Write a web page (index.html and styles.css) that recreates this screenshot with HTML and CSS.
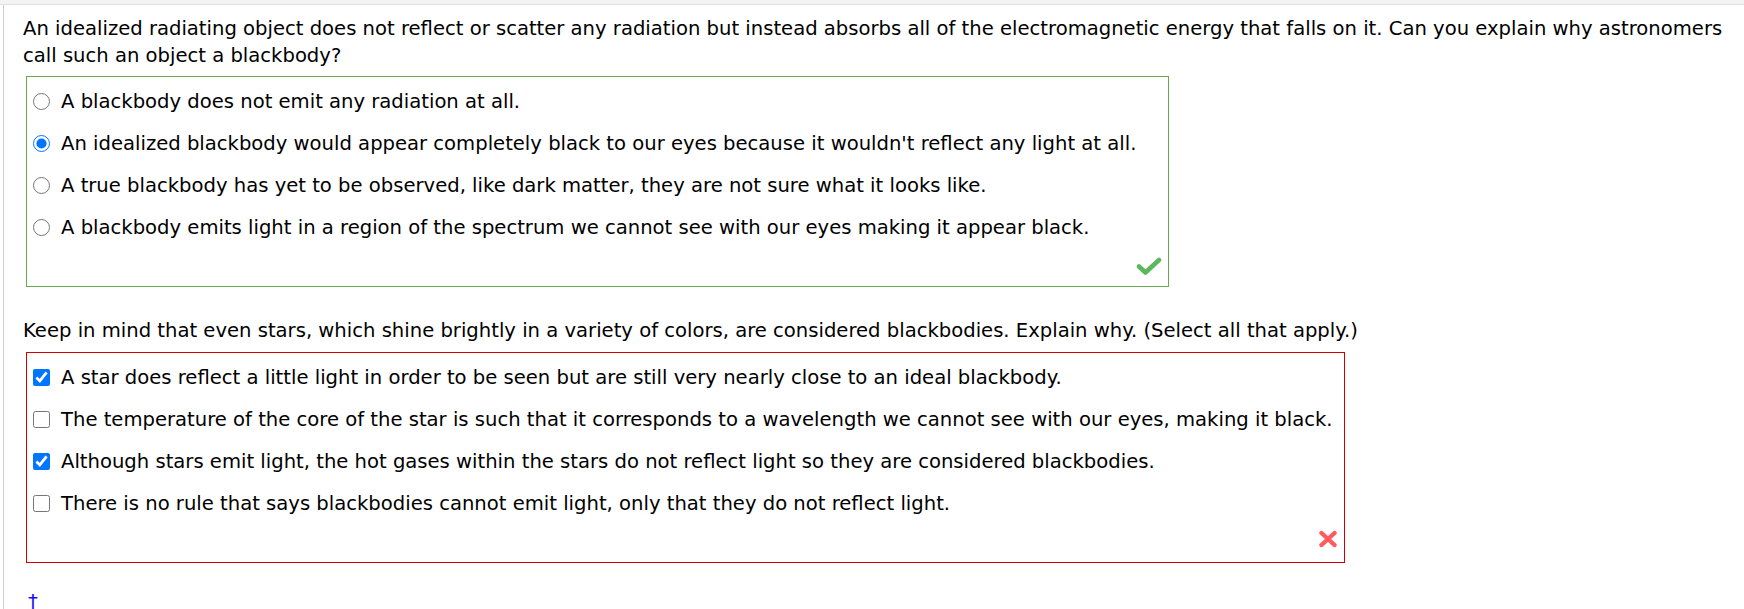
FILE: index.html
```html
<!DOCTYPE html>
<html>
<head>
<meta charset="utf-8">
<link rel="stylesheet" href="styles.css">
</head>
<body>
<div class="topbar"></div>
<div class="page">
  <p class="question">An idealized radiating object does not reflect or scatter any radiation but instead absorbs all of the electromagnetic energy that falls on it. Can you explain why astronomers call such an object a blackbody?</p>
  <div class="answers correct">
    <label class="option"><input type="radio" name="q1"><span>A blackbody does not emit any radiation at all.</span></label>
    <label class="option"><input type="radio" name="q1" checked><span>An idealized blackbody would appear completely black to our eyes because it wouldn't reflect any light at all.</span></label>
    <label class="option"><input type="radio" name="q1"><span>A true blackbody has yet to be observed, like dark matter, they are not sure what it looks like.</span></label>
    <label class="option"><input type="radio" name="q1"><span>A blackbody emits light in a region of the spectrum we cannot see with our eyes making it appear black.</span></label>
    <div class="status">
      <svg class="icon-check" width="26" height="18" viewBox="0 0 26 18"><path d="M3 9.5 L9.5 15.5 L23 3" fill="none" stroke="#5cb85c" stroke-width="4.6" stroke-linecap="round" stroke-linejoin="round"/></svg>
    </div>
  </div>

  <p class="question q2">Keep in mind that even stars, which shine brightly in a variety of colors, are considered blackbodies. Explain why. (Select all that apply.)</p>
  <div class="answers wrong">
    <label class="option"><input type="checkbox" checked><span>A star does reflect a little light in order to be seen but are still very nearly close to an ideal blackbody.</span></label>
    <label class="option"><input type="checkbox"><span>The temperature of the core of the star is such that it corresponds to a wavelength we cannot see with our eyes, making it black.</span></label>
    <label class="option"><input type="checkbox" checked><span>Although stars emit light, the hot gases within the stars do not reflect light so they are considered blackbodies.</span></label>
    <label class="option"><input type="checkbox"><span>There is no rule that says blackbodies cannot emit light, only that they do not reflect light.</span></label>
    <div class="status">
      <svg class="icon-x" width="20" height="18" viewBox="0 0 20 18"><path d="M3.5 3 L16.5 15 M16.5 3 L3.5 15" fill="none" stroke="#ff5a5f" stroke-width="4.4" stroke-linecap="round"/></svg>
    </div>
  </div>
  <div class="dagger">†</div>
</div>
</body>
</html>
```

FILE: styles.css
```css
html, body {
  margin: 0;
  padding: 0;
  background: #fff;
}
body {
  font-family: "DejaVu Sans", Verdana, sans-serif;
  font-size: 19.6px;
  color: #000;
  overflow: hidden;
  height: 609px;
}
.topbar {
  height: 4px;
  background: #f3f3f3;
  border-bottom: 1px solid #e0e0e0;
}
.page {
  margin-left: 3px;
  border-left: 1px solid #cfcfcf;
  padding: 10px 0 0 19px;
  height: 700px;
}
.question {
  margin: 0;
  line-height: 27px;
}
.q2 {
  margin-top: 30px;
}
.answers {
  margin: 7px 0 0 3px;
  padding-top: 3px;
  display: flex;
  flex-direction: column;
}
.answers.correct {
  width: 1141px;
  border: 1px solid #6aa84f;
  margin-top: 7px;
}
.answers.wrong {
  width: 1317px;
  border: 1px solid #d40000;
  margin-top: 8px;
}
.option {
  display: flex;
  align-items: center;
  height: 42px;
}
.option input {
  width: 17px;
  height: 17px;
  margin: 0 11px 0 6px;
  flex: none;
}
.status {
  height: 38px;
  display: flex;
  justify-content: flex-end;
  align-items: flex-end;
  padding-right: 6px;
}
.icon-check {
  margin-bottom: 11px;
}
.icon-x {
  margin-bottom: 14px;
}
.dagger {
  margin: 29px 0 0 5px;
  color: #1a0dff;
  line-height: 20px;
}
```
